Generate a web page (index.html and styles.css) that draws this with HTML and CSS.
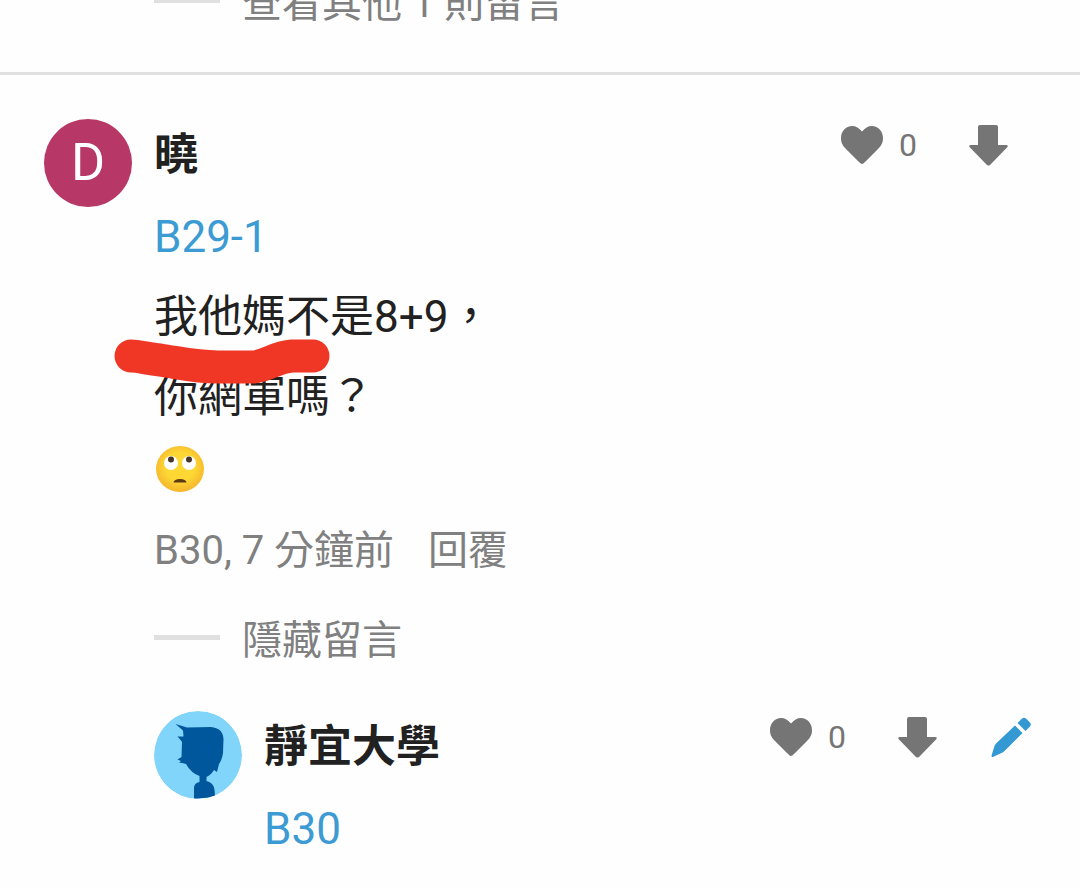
FILE: index.html
```html
<!DOCTYPE html>
<html lang="zh-Hant">
<head>
  <meta charset="UTF-8">
  <meta name="viewport" content="width=device-width, initial-scale=1">
  <title>留言</title>
  <link rel="stylesheet" href="styles.css">
</head>
<body>

  <!-- Shared icons -->
  <svg class="icon-defs" aria-hidden="true">
    <symbol id="icon-heart" viewBox="0 0 42 38">
      <path d="M21 38 C20 38 19 37 17 35 L5 23 C1 19 0 16 0 12 C0 5 5 0 11 0 C15 0 18 2 21 5.500 C24 2 27 0 31 0 C37 0 42 5 42 12 C42 16 41 19 37 23 L25 35 C23 37 22 38 21 38 Z"/>
    </symbol>
    <symbol id="icon-down" viewBox="0 0 39 41">
      <path d="M11 0 H27 Q29 0 29 2 V20 H37 Q40 20 38 22.500 L22 39 Q19.500 42 17 39 L1 22.500 Q-1 20 2 20 H9 V2 Q9 0 11 0 Z"/>
    </symbol>
    <symbol id="icon-pencil" viewBox="0 0 40 40">
      <path d="M24 8.500 L31.500 16 L13.500 34 Q12.500 35 11 35.700 L2.500 39.700 Q0 40.500 .7 38 L3.500 29 Q4 27.500 5 26.500 Z"/>
      <path d="M26.500 6 L30.500 2 Q33 -.5 35.500 2 L38.500 5 Q41 7.500 38.500 10 L34.500 14 Z"/>
    </symbol>
  </svg>

  <main class="comments">

    <!-- Previous thread -->
    <div class="previous">
      <button type="button" class="toggle"><span class="dash"></span>查看其他 1 則留言</button>
    </div>

    <!-- B30 -->
    <article class="comment">
      <div class="avatar avatar-letter">D</div>
      <div class="content">
        <header class="comment-header">
          <h2 class="name">曉</h2>
          <div class="actions actions-inset">
            <button type="button" class="action" aria-label="喜歡"><svg class="heart"><use href="#icon-heart"/></svg><span class="count">0</span></button>
            <button type="button" class="action" aria-label="不喜歡"><svg class="down"><use href="#icon-down"/></svg></button>
          </div>
        </header>

        <div class="text">
          <p><a href="#b29-1">B29-1</a></p>
          <p>我他媽不是8+9，</p>
          <p>你網軍嗎？</p>
          <p class="emoji-line">
            <svg class="emoji" viewBox="0 0 48 48" role="img" aria-label="翻白眼">
              <defs>
                <radialGradient id="face" cx="50%" cy="45%" r="55%">
                  <stop offset="55%" stop-color="#fdd835"/>
                  <stop offset="100%" stop-color="#f5b52c"/>
                </radialGradient>
              </defs>
              <ellipse cx="24" cy="24" rx="24" ry="23" fill="url(#face)"/>
              <circle cx="15" cy="18" r="7" fill="#fff"/>
              <circle cx="33" cy="18" r="7" fill="#fff"/>
              <circle cx="15" cy="14.500" r="3" fill="#44352a"/>
              <circle cx="33" cy="14.500" r="3" fill="#44352a"/>
              <path d="M17.500 37.500 Q18 34 24 34 Q30 34 30.500 37.500 Z" fill="#5c3a13"/>
            </svg>
          </p>
          <svg class="marker" viewBox="0 0 216 46" aria-hidden="true">
            <path d="M17 17 C25 17 34 20 46 21 C66 24 82 28 104 28 L140 28 C154 26 163 18 178 17 H199"/>
          </svg>
        </div>

        <div class="meta">
          <span>B30, 7 分鐘前</span>
          <button type="button" class="reply-button">回覆</button>
        </div>
        <button type="button" class="toggle"><span class="dash"></span>隱藏留言</button>

        <!-- Reply -->
        <article class="comment reply">
          <svg class="avatar" viewBox="0 0 88 88" role="img" aria-label="靜宜大學">
            <circle cx="44" cy="44" r="44" fill="#81d4fa"/>
            <path d="M21.500 13 L33 16.500 L57 16 Q69 17 69.500 28 L69 42 Q68 49 65 53 L63 61 L60 59 Q57 64 52.500 66 L52.500 70 Q60 72 60.500 79 L61 84.500 L55 86.500 L40 87.800 L40 77 Q40 72 45.500 71 L45.500 65 Q37 62 32 53 Q30 52 25 51.500 L27 50 L23.500 48.500 L27.500 46 L28 31 Q26 28 23.500 25.500 L29.500 25.500 L29 19.500 Z" fill="#01579b"/>
          </svg>
          <div class="content">
            <header class="comment-header">
              <h2 class="name">靜宜大學</h2>
              <div class="actions">
                <button type="button" class="action" aria-label="喜歡"><svg class="heart"><use href="#icon-heart"/></svg><span class="count">0</span></button>
                <button type="button" class="action" aria-label="不喜歡"><svg class="down"><use href="#icon-down"/></svg></button>
                <button type="button" class="action action-edit" aria-label="編輯"><svg class="pencil"><use href="#icon-pencil"/></svg></button>
              </div>
            </header>
            <div class="text">
              <p><a href="#b30">B30</a></p>
            </div>
          </div>
        </article>
      </div>
    </article>

  </main>
</body>
</html>
```
FILE: styles.css
```css
* {
  box-sizing: border-box;
}
body {
  margin: 0;
  background-color: #fefefe;
  color: #212121;
  font-family: Roboto, "Noto Sans CJK TC", sans-serif;
  font-size: 44px;
}
p, h2 {
  margin: 0;
}
a {
  color: #3d9bd3;
  text-decoration: none;
}
button {
  padding: 0;
  border: none;
  background: none;
  color: inherit;
  font: inherit;
  cursor: pointer;
}
svg {
  display: block;
  flex: none;
}
.icon-defs {
  position: absolute;
  width: 0;
  height: 0;
}
.comments {
  overflow: hidden;
}

/* Tail of the previous thread */
.previous {
  margin-top: -30px;
  padding: 0 44px 34px 154px;
  border-bottom: 3px solid #e0e0e0;
}
.toggle {
  display: flex;
  align-items: center;
  gap: 22px;
  color: #808080;
  font-size: 40px;
  line-height: 68px;
}
.dash {
  width: 66px;
  height: 5px;
  margin-bottom: 8px;
  background-color: #e0e0e0;
}

/* Comment */
.comment {
  display: flex;
  gap: 22px;
  padding: 44px 49px 0 44px;
}
.avatar {
  flex: none;
  width: 88px;
  height: 88px;
  border-radius: 50%;
}
.avatar-letter {
  background-color: #b73766;
  color: #fff;
  font-size: 52px;
  line-height: 88px;
  text-align: center;
}
.content {
  flex: 1;
  min-width: 0;
}
.comment-header {
  display: flex;
  justify-content: space-between;
  align-items: flex-start;
  margin-bottom: 6px;
}
.name {
  font-size: 44px;
  font-weight: 700;
  line-height: 72px;
}
.actions {
  display: flex;
  align-items: center;
  gap: 52px;
  height: 52px;
  color: #757575;
}
.actions-inset {
  padding-right: 23px;
}
.action {
  display: flex;
  align-items: center;
  gap: 16px;
}
.action svg {
  fill: currentColor;
}
.action-edit {
  margin-left: 2px;
  color: #3498d3;
}
.heart {
  width: 42px;
  height: 38px;
}
.down {
  width: 39px;
  height: 41px;
}
.pencil {
  width: 40px;
  height: 40px;
}
.count {
  font-size: 32px;
  line-height: 40px;
}
.text {
  position: relative;
  line-height: 80px;
}
.text .emoji-line {
  display: flex;
  align-items: center;
  height: 64px;
  padding-left: 2px;
}
.emoji {
  width: 48px;
  height: 48px;
}

/* Red pen stroke over the text */
.marker {
  position: absolute;
  top: 142px;
  left: -40px;
  width: 216px;
  height: 46px;
  fill: none;
  stroke: #f03726;
  stroke-width: 33px;
  stroke-linecap: round;
  stroke-linejoin: round;
}
.meta {
  display: flex;
  gap: 34px;
  margin: 16px 0 22px;
  color: #808080;
  font-size: 40px;
  line-height: 68px;
}
.reply {
  padding: 36px 0 0;
}
```
